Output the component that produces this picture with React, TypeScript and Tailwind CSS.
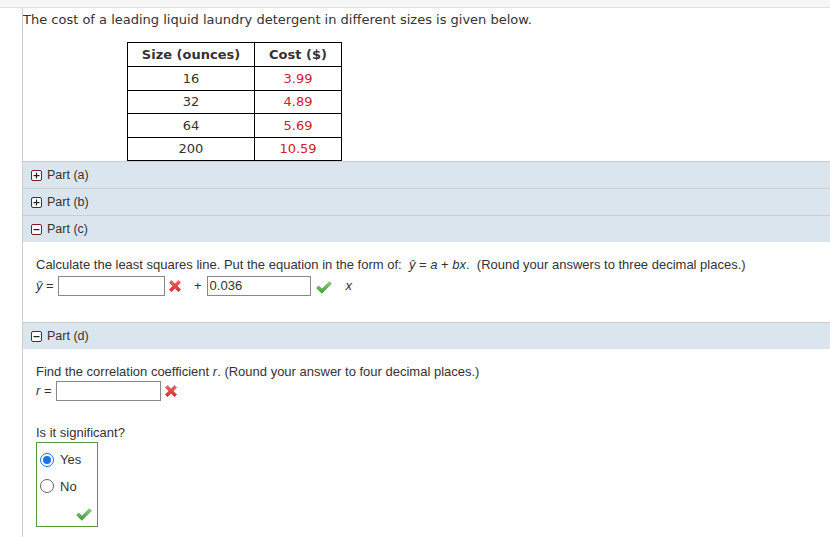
import React from "react";

function Toggle({ open }: { open: boolean }) {
  return (
    <span className="inline-flex h-[11px] w-[11px] items-center justify-center rounded-[2px] border border-[#7b1a24] bg-white">
      <svg width="7" height="7" viewBox="0 0 7 7">
        <rect x="0.5" y="3" width="6" height="1.2" fill="#222" />
        {!open && <rect x="2.9" y="0.5" width="1.2" height="6" fill="#222" />}
      </svg>
    </span>
  );
}

function Cross() {
  return (
    <svg width="16" height="16" viewBox="0 0 16 16">
      <defs>
        <linearGradient id="xg" x1="0" y1="0" x2="0" y2="1">
          <stop offset="0" stopColor="#f06a6a" />
          <stop offset="1" stopColor="#d42a2a" />
        </linearGradient>
      </defs>
      <path d="M2 4.5 L4.5 2 L8 5.5 L11.5 2 L14 4.5 L10.5 8 L14 11.5 L11.5 14 L8 10.5 L4.5 14 L2 11.5 L5.5 8 Z" fill="url(#xg)" />
    </svg>
  );
}

function Check() {
  return (
    <svg width="18" height="15" viewBox="0 0 17 14">
      <defs>
        <linearGradient id="cg" x1="0" y1="0" x2="0" y2="1">
          <stop offset="0" stopColor="#8fcf7a" />
          <stop offset="1" stopColor="#3f9a3a" />
        </linearGradient>
      </defs>
      <path d="M1 7.5 L3.5 5 L6.5 8 L13.5 1 L16 3.5 L6.5 13 Z" fill="url(#cg)" />
    </svg>
  );
}

function PartHeader({ label, open }: { label: string; open: boolean }) {
  return (
    <div className="flex h-[27px] items-center gap-[5px] border-t border-[#c9ced4] bg-[#dbe5ee] pl-[8px] text-[12.5px] text-[#333]">
      <Toggle open={open} />
      <span>{label}</span>
    </div>
  );
}

const rows = [
  ["16", "3.99"],
  ["32", "4.89"],
  ["64", "5.69"],
  ["200", "10.59"],
];

export default function App() {
  return (
    <div className="min-h-[537px] w-[830px] bg-white font-['Liberation_Sans',Arial,sans-serif] text-[#333]">
      <div className="h-[8px] border-b border-[#e2e2e2] bg-[#f6f6f6]" />
      <div className="ml-[22px] min-h-[529px] border-l border-[#cfcfcf]">
        {/* intro + table */}
        <p className="pt-[1px] text-[13px] leading-[22px] font-['DejaVu_Sans',Verdana,sans-serif] text-[#333]">
          The cost of a leading liquid laundry detergent in different sizes is given below.
        </p>
        <table className="mt-[11px] ml-[104px] border-collapse font-['DejaVu_Sans',Verdana,sans-serif] text-[13px]">
          <thead>
            <tr className="h-[24px]">
              <th className="w-[127px] border border-black font-bold text-[#333]">Size (ounces)</th>
              <th className="w-[87px] border border-black font-bold text-[#333]">Cost ($)</th>
            </tr>
          </thead>
          <tbody>
            {rows.map(([s, c]) => (
              <tr key={s} className="h-[23.5px]">
                <td className="border border-black text-center text-[#333]">{s}</td>
                <td className="border border-black text-center text-[#d0202a]">{c}</td>
              </tr>
            ))}
          </tbody>
        </table>

        <div>
          <PartHeader label="Part (a)" open={false} />
          <PartHeader label="Part (b)" open={false} />
          <PartHeader label="Part (c)" open={true} />
        </div>

        {/* part c */}
        <div className="pl-[13px] pt-[14px] pb-[26px] text-[13px]">
          <p className="leading-[17px]">
            Calculate the least squares line. Put the equation in the form of:&nbsp; <i>ŷ</i> = <i>a</i> + <i>bx</i>.&nbsp; (Round your answers to three decimal places.)
          </p>
          <div className="mt-[3px] flex items-center">
            <span className="w-[22px]"><i>ŷ</i> =</span>
            <span className="h-[20px] w-[107px] border border-[#888] bg-white" />
            <span className="ml-[2px]"><Cross /></span>
            <span className="ml-[11px] mr-[5px]">+</span>
            <span className="flex h-[20px] w-[104px] items-center border border-[#888] bg-white pl-[2px]">0.036</span>
            <span className="ml-[4px] mt-[2px]"><Check /></span>
            <i className="ml-[13px]">x</i>
          </div>
        </div>

        <PartHeader label="Part (d)" open={true} />

        {/* part d */}
        <div className="pl-[13px] pt-[14px] text-[13px]">
          <p className="leading-[17px]">
            Find the correlation coefficient <i>r</i>. (Round your answer to four decimal places.)
          </p>
          <div className="mt-[1px] flex items-center">
            <span className="w-[20px]"><i>r</i> =</span>
            <span className="h-[20px] w-[105px] border border-[#888] bg-white" />
            <span className="ml-[2px]"><Cross /></span>
          </div>
          <p className="mt-[23px] leading-[17px]">Is it significant?</p>
          <div className="mt-[1px] flex h-[85px] w-[62px] flex-col border border-[#5a9a3a] pl-[3px] pt-[7px]">
            <label className="flex items-center gap-[6px]">
              <span className="flex h-[14px] w-[14px] items-center justify-center rounded-full border border-[#1a73e8]">
                <span className="h-[8px] w-[8px] rounded-full bg-[#1a73e8]" />
              </span>
              <span>Yes</span>
            </label>
            <label className="mt-[7px] flex items-center gap-[6px]">
              <span className="h-[14px] w-[14px] rounded-full border border-[#666]" />
              <span>No</span>
            </label>
            <span className="mt-auto mb-[4px] ml-auto mr-[4px]"><Check /></span>
          </div>
        </div>
      </div>
    </div>
  );
}
